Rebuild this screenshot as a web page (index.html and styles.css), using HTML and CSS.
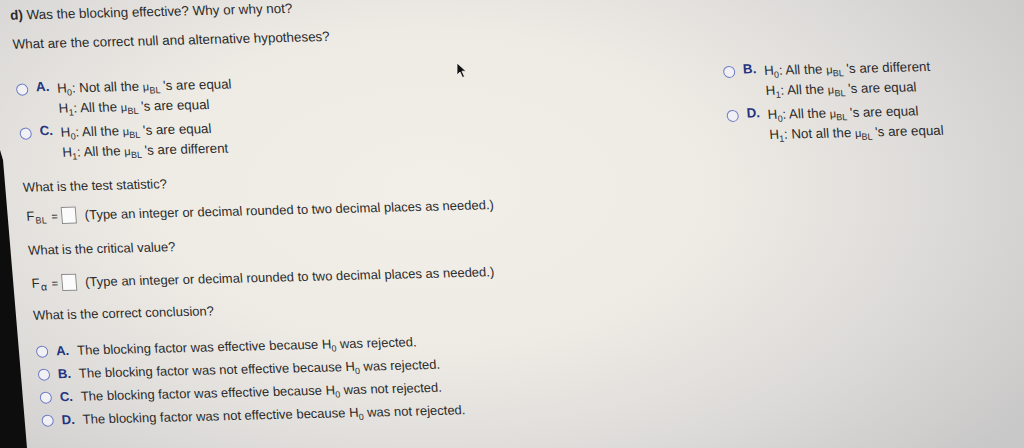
FILE: index.html
```html
<!DOCTYPE html>
<html>
<head>
<meta charset="utf-8">
<link rel="stylesheet" href="styles.css">
</head>
<body>
<div class="page">
  <p class="title"><b>d)</b> Was the blocking effective? Why or why not?</p>
  <p class="q">What are the correct null and alternative hypotheses?</p>
  <div class="hyps">
    <div class="col">
      <div class="opt">
        <span class="radio"></span><span class="let">A.</span>
        <div class="lines">
          <div class="ln">H<sub>0</sub>: Not all the <span class="mu">μ<sub>BL</sub></span>'s are equal</div>
          <div class="ln">H<sub>1</sub>: All the <span class="mu">μ<sub>BL</sub></span>'s are equal</div>
        </div>
      </div>
      <div class="opt">
        <span class="radio"></span><span class="let">C.</span>
        <div class="lines">
          <div class="ln">H<sub>0</sub>: All the <span class="mu">μ<sub>BL</sub></span>'s are equal</div>
          <div class="ln">H<sub>1</sub>: All the <span class="mu">μ<sub>BL</sub></span>'s are different</div>
        </div>
      </div>
    </div>
    <div class="col">
      <div class="opt">
        <span class="radio"></span><span class="let">B.</span>
        <div class="lines">
          <div class="ln">H<sub>0</sub>: All the <span class="mu">μ<sub>BL</sub></span>'s are different</div>
          <div class="ln">H<sub>1</sub>: All the <span class="mu">μ<sub>BL</sub></span>'s are equal</div>
        </div>
      </div>
      <div class="opt">
        <span class="radio"></span><span class="let">D.</span>
        <div class="lines">
          <div class="ln">H<sub>0</sub>: All the <span class="mu">μ<sub>BL</sub></span>'s are equal</div>
          <div class="ln">H<sub>1</sub>: Not all the <span class="mu">μ<sub>BL</sub></span>'s are equal</div>
        </div>
      </div>
    </div>
  </div>

  <p class="sec">What is the test statistic?</p>
  <div class="ans"><span class="var">F<sub>BL</sub></span><span class="eq">=</span><span class="box"></span><span class="note">(Type an integer or decimal rounded to two decimal places as needed.)</span></div>

  <p class="sec">What is the critical value?</p>
  <div class="ans ans-crit"><span class="var">F<sub class="alpha">α</sub></span><span class="eq">=</span><span class="box"></span><span class="note">(Type an integer or decimal rounded to two decimal places as needed.)</span></div>

  <p class="sec sec-concl">What is the correct conclusion?</p>
  <div class="concl">
    <div class="crow"><span class="radio"></span><span class="let">A.</span><span>The blocking factor was effective because H<sub>0</sub> was rejected.</span></div>
    <div class="crow"><span class="radio"></span><span class="let">B.</span><span>The blocking factor was not effective because H<sub>0</sub> was rejected.</span></div>
    <div class="crow"><span class="radio"></span><span class="let">C.</span><span>The blocking factor was effective because H<sub>0</sub> was not rejected.</span></div>
    <div class="crow"><span class="radio"></span><span class="let">D.</span><span>The blocking factor was not effective because H<sub>0</sub> was not rejected.</span></div>
  </div>
</div>

<svg class="cursor" width="12" height="17" viewBox="0 0 12 17"><path d="M1 1 L1 13 L4 10 L6.5 15.5 L8.5 14.6 L6 9.2 L10 9.2 Z" fill="#111" stroke="#f4f4f0" stroke-width="0.8"/></svg>
<div class="bezel"></div>
</body>
</html>
```
FILE: styles.css
```css
html, body {
  margin: 0;
  height: 448px;
  overflow: hidden;
}
body {
  position: relative;
  font-family: "Liberation Sans", Arial, sans-serif;
  background: radial-gradient(ellipse 720px 400px at 430px 190px, #f2efe8 0%, #eeebe5 40%, #dcdad8 72%, #c9c8c8 100%);
}
.page {
  transform: matrix(1, -0.025, 0.08, 1, 0, 0);
  transform-origin: 0 0;
  padding: 8px 0 0 8px;
  font-size: 13px;
  color: #2b2b2b;
}
p { margin: 0; }
.title {
  font-size: 13.4px;
  line-height: 16px;
  margin-left: 1px;
}
.title b { font-weight: bold; }
.q {
  font-size: 13.4px;
  line-height: 16px;
  margin-top: 13px;
  margin-left: 1px;
}
sub {
  font-size: 9px;
  vertical-align: -3px;
  line-height: 0;
}
.mu { font-size: 11px; }
.mu sub { font-size: 9px; margin-right: 3px; }

.hyps {
  display: grid;
  grid-template-columns: 707px auto;
  margin-top: 27px;
  margin-left: 1px;
  font-size: 13.3px;
}
.col {
  display: flex;
  flex-direction: column;
  gap: 4px;
}
.opt {
  display: flex;
  align-items: flex-start;
}
.opt .radio { margin-top: 4px; }
.radio {
  flex: none;
  width: 10px;
  height: 10px;
  border: 1.5px solid #6e7cc4;
  border-radius: 50%;
  background: #f1f1f5;
}
.let {
  flex: none;
  width: 21px;
  margin-left: 8px;
  font-weight: bold;
  color: #233381;
}
.ln { line-height: 19px; }

.sec {
  line-height: 16px;
  margin-top: 16px;
}
.hyps + .sec { margin-top: 16px; }
.sec-concl { margin-top: 14px; }
.ans {
  line-height: 20px;
  margin-top: 11px;
  margin-left: 1px;
  white-space: nowrap;
}
.ans-crit { margin-top: 15px; }
.var { font-size: 13px; }
.ans sub { font-size: 9px; margin-left: 1px; }
.ans sub.alpha { font-size: 10.5px; }
.eq { margin: 0 4px 0 5px; font-size: 11px; }
.box {
  display: inline-block;
  vertical-align: middle;
  width: 13px;
  height: 15px;
  border: 1px solid #8a8a8a;
  background: #fbfbfb;
  margin-right: 8px;
  margin-top: -2px;
}

.concl {
  margin-top: 16px;
  display: flex;
  flex-direction: column;
}
.crow {
  display: flex;
  align-items: center;
  line-height: 23px;
}

.cursor {
  position: absolute;
  left: 456px;
  top: 62px;
}
.bezel {
  position: absolute;
  left: 0;
  top: 0;
  width: 40px;
  height: 448px;
  background: #0d0d0d;
  clip-path: polygon(0 150px, 3px 160px, 27px 448px, 0 448px);
}
```
